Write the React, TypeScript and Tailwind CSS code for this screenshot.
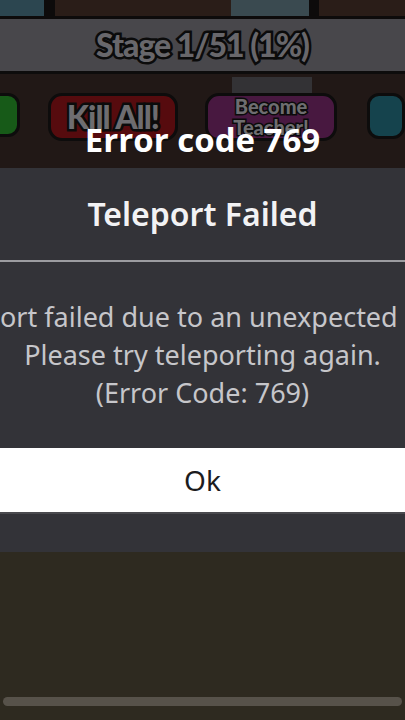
import React from 'react'

const outline = {
  WebkitTextStroke: '5px #0b0b0b',
  paintOrder: 'stroke fill',
} as React.CSSProperties

const gameFont = { fontFamily: 'Lato, "Noto Sans", sans-serif' }

function GameTop() {
  return (
    <div className="relative h-[168px] bg-[#211816] overflow-hidden">
      {/* top tiles */}
      <div className="flex h-[19px] bg-[#0d0b0b]">
        <div className="w-[44px] h-[16px] bg-[#2c4650]" />
        <div className="w-[11px]" />
        <div className="w-[176px] h-[16px] bg-[#2a1d18]" />
        <div className="w-[78px] h-[16px] bg-[#3a4a50]" />
        <div className="w-[10px]" />
        <div className="flex-1 h-[16px] bg-[#2a1d18]" />
      </div>
      {/* stage bar */}
      <div className="h-[55px] bg-[#48474b] border-b-[3px] border-[#0d0c0c] flex items-center justify-center">
        <span
          className="text-[32px] font-black text-[#68676b] tracking-[-1px]"
          style={{ ...gameFont, ...outline }}
        >
          Stage 1/51 (1%)
        </span>
      </div>
      {/* pillar */}
      <div className="absolute left-[232px] top-[77px] w-[80px] h-[24px] bg-[#333235]" />
      {/* button row */}
      <div className="relative flex items-start pt-[19px]">
        <div className="ml-[-20px] w-[42px] h-[44px] rounded-[12px] bg-[#175a18] border-[3px] border-[#0d0c0c]" />
        <div className="ml-[28px] w-[138px] h-[48px] rounded-[14px] bg-[#560b0e] border-[3px] border-[#0d0c0c] flex items-center justify-center">
          <span
            className="text-[32px] font-black text-[#6e6d70] tracking-[-1px]"
            style={{ ...gameFont, ...outline }}
          >
            Kill All!
          </span>
        </div>
        <div className="ml-[27px] w-[140px] h-[48px] rounded-[14px] bg-[#481840] border-[3px] border-[#0d0c0c] flex flex-col items-center justify-start leading-[21px]">
          <span
            className="text-[20px] font-black text-[#6e6d70]"
            style={{ ...gameFont, ...outline, WebkitTextStroke: '3px #0b0b0b' }}
          >
            Become
          </span>
          <span
            className="text-[20px] font-black text-[#6e6d70]"
            style={{ ...gameFont, ...outline, WebkitTextStroke: '3px #0b0b0b' }}
          >
            Teacher!
          </span>
        </div>
        <div className="ml-[30px] w-[40px] h-[46px] rounded-[12px] bg-[#15434d] border-[3px] border-[#0d0c0c]" />
      </div>
      {/* overlay caption */}
      <div className="absolute left-0 right-0 top-[118px] flex justify-center">
        <span
          className="text-[33px] font-bold text-white leading-[44px]"
          style={{ fontFamily: '"Open Sans", "Noto Sans", sans-serif' }}
        >
          Error code 769
        </span>
      </div>
    </div>
  )
}

export default function App() {
  const dlgFont = { fontFamily: '"Noto Sans", "Open Sans", sans-serif' }
  return (
    <div className="w-[405px] h-[720px] overflow-hidden bg-[#2e2a20] flex flex-col">
      <GameTop />
      <div className="h-[384px] bg-[#333338] flex flex-col" style={dlgFont}>
        <div className="h-[92px] flex items-center justify-center">
          <span className="text-[32px] font-semibold text-[#f2f2f4]">Teleport Failed</span>
        </div>
        <div className="h-[2px] bg-[#9c9ca0]" />
        <div className="h-[186px] flex flex-col items-center justify-center overflow-hidden text-[27px] text-[#c6c6ca] leading-[38px]">
          <div className="whitespace-nowrap">Teleport failed due to an unexpected error.</div>
          <div className="whitespace-nowrap">Please try teleporting again.</div>
          <div className="whitespace-nowrap">(Error Code: 769)</div>
        </div>
        <div className="h-[66px] bg-white flex items-center justify-center border-b-[2px] border-[#4a4a4e]">
          <span className="text-[28px] text-[#1c1c1e]">Ok</span>
        </div>
      </div>
      <div className="flex-1 flex flex-col justify-end pb-[14px] px-[3px]">
        <div className="h-[9px] rounded-full bg-[#57524a]" />
      </div>
    </div>
  )
}
